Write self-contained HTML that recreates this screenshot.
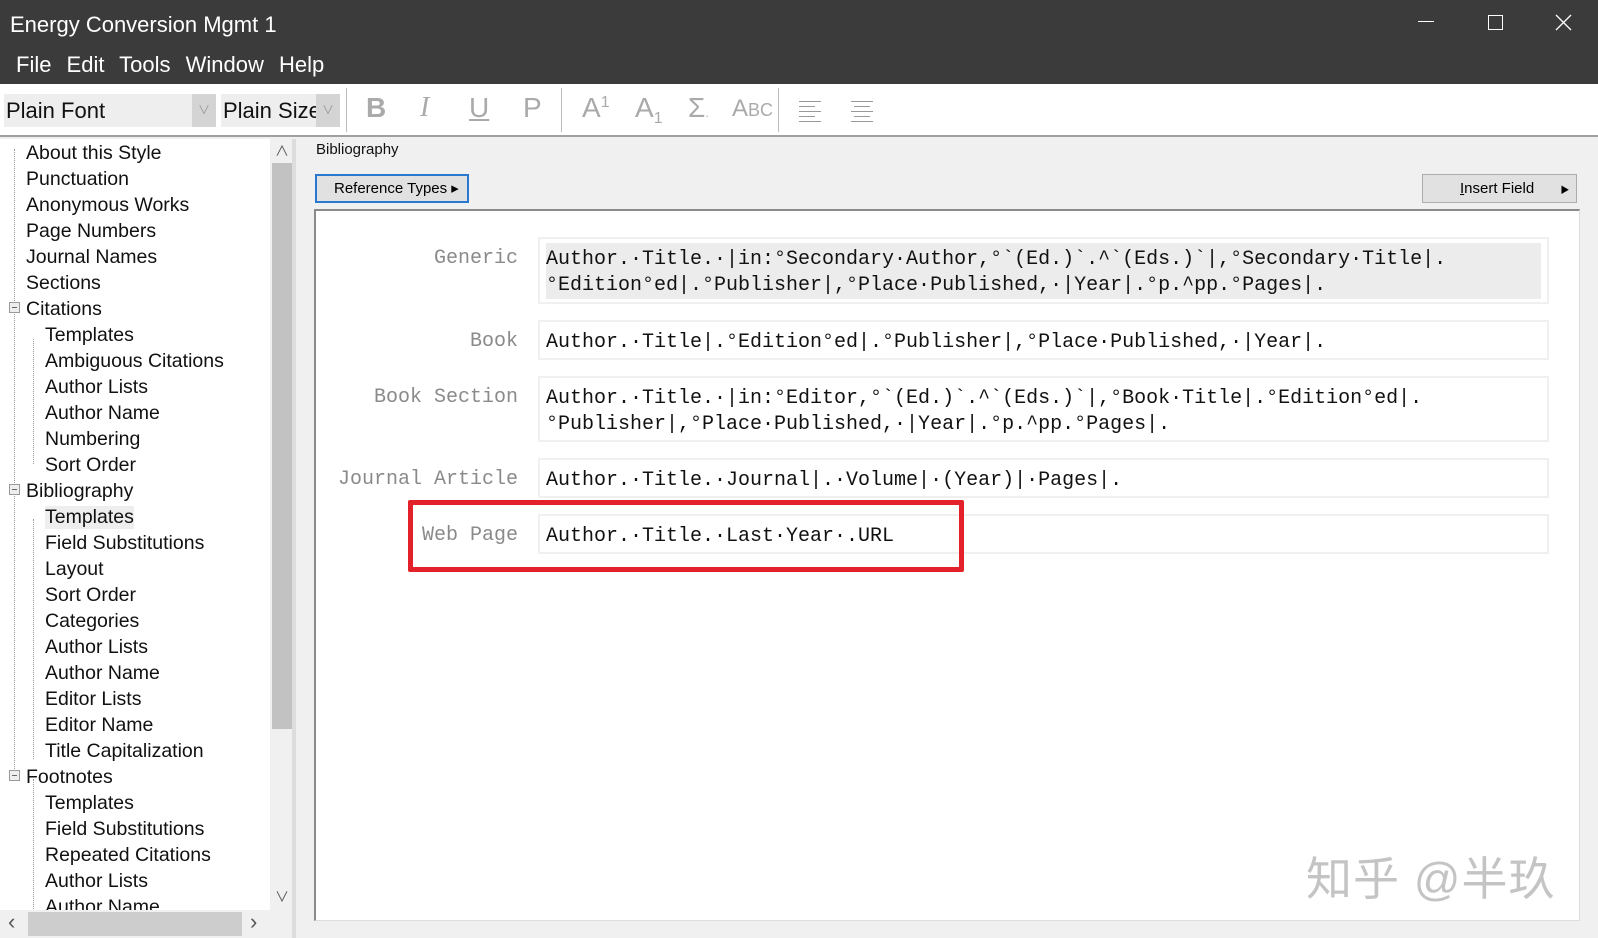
<!DOCTYPE html>
<html><head><meta charset="utf-8"><style>
*{margin:0;padding:0;box-sizing:border-box}
body{width:1598px;height:938px;overflow:hidden;background:#f0f0f0;font-family:"Liberation Sans","Noto Sans CJK SC",sans-serif;position:relative}
.abs{position:absolute}
#title{left:0;top:0;width:1598px;height:84px;background:#3b3b3b;color:#fff}
#title .t{left:10px;top:12px;font-size:22px}
#title .m{left:16px;top:52px;font-size:22px;word-spacing:9px}
#tb{left:0;top:84px;width:1598px;height:53px;background:#fff;border-bottom:2px solid #a0a0a0}
.combo{background:#eee;height:33px;top:10px;font-size:22px;line-height:33px;padding-left:2px;color:#111;overflow:hidden;white-space:nowrap}
.dd{background:#d4d4d4;width:24px;height:33px;top:0;right:0;color:#999;font-size:12px;text-align:center}
.ic{top:8px;font-size:28px;color:#aaa}
.sep{top:4px;width:1px;height:44px;background:#bbb}
#tree{left:0;top:139px;width:296px;height:799px;background:#fff;border-right:4px solid #ddd}
.it{font-size:19.5px;color:#111;position:absolute;white-space:nowrap}
.mono{font-family:"Liberation Mono",monospace;font-size:20px}
.lab{color:#8a8a8a;text-align:right;width:220px;left:298px}
.fld{left:538px;width:1011px;border:2px solid #f0f0f0;background:#fff;padding:8px 6px 4px;color:#111;line-height:26px;white-space:pre}
.al{width:22px;height:1px;background:#999;position:absolute}
</style></head><body>
<div id="title" class="abs">
 <div class="abs t">Energy Conversion Mgmt 1</div>
 <div class="abs m">File Edit Tools Window Help</div>
 <div class="abs" style="left:1418px;top:21px;width:16px;height:1px;background:#fff"></div>
 <div class="abs" style="left:1488px;top:15px;width:15px;height:15px;border:1px solid #fff"></div>
 <svg class="abs" style="left:1555px;top:14px" width="17" height="17"><path d="M1 1L16 16M16 1L1 16" stroke="#fff" stroke-width="1.3"/></svg>
</div>
<div id="tb" class="abs">
 <div class="abs combo" style="left:4px;width:212px">Plain Font<div class="abs dd">&#8744;</div></div>
 <div class="abs combo" style="left:221px;width:119px">Plain Size<div class="abs dd">&#8744;</div></div>
 <div class="abs sep" style="left:346px"></div>
 <div class="abs ic" style="left:366px;font-weight:bold">B</div>
 <div class="abs ic" style="left:420px;font-style:italic;font-family:'Liberation Serif',serif">I</div>
 <div class="abs ic" style="left:469px;text-decoration:underline">U</div>
 <div class="abs ic" style="left:523px">P</div>
 <div class="abs sep" style="left:561px"></div>
 <div class="abs ic" style="left:582px">A<span style="font-size:16px;vertical-align:10px">1</span></div>
 <div class="abs ic" style="left:635px">A<span style="font-size:16px;vertical-align:-6px">1</span></div>
 <div class="abs ic" style="left:688px">&Sigma;<span style="font-size:12px">.</span></div>
 <div class="abs ic" style="left:732px;font-size:24px;top:11px">A<span style="font-size:18px">BC</span></div>
 <div class="abs sep" style="left:778px"></div>
 <div class="al" style="left:799px;top:17px"></div><div class="al" style="left:799px;top:22px;width:16px"></div><div class="al" style="left:799px;top:27px"></div><div class="al" style="left:799px;top:32px;width:16px"></div><div class="al" style="left:799px;top:37px"></div>
 <div class="al" style="left:851px;top:17px"></div><div class="al" style="left:854px;top:22px;width:16px"></div><div class="al" style="left:851px;top:27px"></div><div class="al" style="left:854px;top:32px;width:16px"></div><div class="al" style="left:851px;top:37px"></div>
</div>
<div id="tree" class="abs">
 <div class="abs" style="left:14px;top:10px;height:630px;border-left:1px dotted #999"></div>
 <div class="abs" style="left:33px;top:200px;height:125px;border-left:1px dotted #999"></div>
 <div class="abs" style="left:33px;top:380px;height:240px;border-left:1px dotted #999"></div>
 <div class="abs" style="left:33px;top:640px;height:150px;border-left:1px dotted #999"></div>
 <div class="it" style="left:26px;top:3px">About this Style</div>
 <div class="it" style="left:26px;top:29px">Punctuation</div>
 <div class="it" style="left:26px;top:55px">Anonymous Works</div>
 <div class="it" style="left:26px;top:81px">Page Numbers</div>
 <div class="it" style="left:26px;top:107px">Journal Names</div>
 <div class="it" style="left:26px;top:133px">Sections</div>
 <div class="it" style="left:26px;top:159px">Citations</div>
 <div class="it" style="left:45px;top:185px">Templates</div>
 <div class="it" style="left:45px;top:211px">Ambiguous Citations</div>
 <div class="it" style="left:45px;top:237px">Author Lists</div>
 <div class="it" style="left:45px;top:263px">Author Name</div>
 <div class="it" style="left:45px;top:289px">Numbering</div>
 <div class="it" style="left:45px;top:315px">Sort Order</div>
 <div class="it" style="left:26px;top:341px">Bibliography</div>
 <div class="it" style="left:45px;top:367px;background:#eee">Templates</div>
 <div class="it" style="left:45px;top:393px">Field Substitutions</div>
 <div class="it" style="left:45px;top:419px">Layout</div>
 <div class="it" style="left:45px;top:445px">Sort Order</div>
 <div class="it" style="left:45px;top:471px">Categories</div>
 <div class="it" style="left:45px;top:497px">Author Lists</div>
 <div class="it" style="left:45px;top:523px">Author Name</div>
 <div class="it" style="left:45px;top:549px">Editor Lists</div>
 <div class="it" style="left:45px;top:575px">Editor Name</div>
 <div class="it" style="left:45px;top:601px">Title Capitalization</div>
 <div class="it" style="left:26px;top:627px">Footnotes</div>
 <div class="it" style="left:45px;top:653px">Templates</div>
 <div class="it" style="left:45px;top:679px">Field Substitutions</div>
 <div class="it" style="left:45px;top:705px">Repeated Citations</div>
 <div class="it" style="left:45px;top:731px">Author Lists</div>
 <div class="it" style="left:45px;top:757px;height:14px;overflow:hidden">Author Name</div>
 <div class="abs" style="left:9px;top:163px;width:11px;height:11px;border:1px solid #999;background:#eee"><div class="abs" style="left:2px;top:4px;width:5px;height:1px;background:#666"></div></div>
 <div class="abs" style="left:9px;top:345px;width:11px;height:11px;border:1px solid #999;background:#eee"><div class="abs" style="left:2px;top:4px;width:5px;height:1px;background:#666"></div></div>
 <div class="abs" style="left:9px;top:631px;width:11px;height:11px;border:1px solid #999;background:#eee"><div class="abs" style="left:2px;top:4px;width:5px;height:1px;background:#666"></div></div>
 <div class="abs" style="left:270px;top:0;width:22px;height:771px;background:#f0f0f0"></div>
 <div class="abs" style="left:272px;top:24px;width:20px;height:566px;background:#c2c2c2"></div>
 <div class="abs" style="left:275px;top:2px;font-size:14px;color:#555">&#8743;</div>
 <div class="abs" style="left:275px;top:748px;font-size:14px;color:#555">&#8744;</div>
 <div class="abs" style="left:0;top:771px;width:292px;height:28px;background:#f0f0f0"></div>
 <div class="abs" style="left:28px;top:773px;width:214px;height:24px;background:#cdcdcd"></div>
 <div class="abs" style="left:8px;top:770px;font-size:22px;color:#555">&lsaquo;</div>
 <div class="abs" style="left:250px;top:770px;font-size:22px;color:#555">&rsaquo;</div>
</div>
<div class="abs" style="left:316px;top:141px;font-size:15px;color:#111">Bibliography</div>
<div class="abs" style="left:315px;top:174px;width:154px;height:29px;background:#e1e1e1;border:2px solid #2a78d0;font-size:15px;line-height:25px;padding-left:17px">Reference Types &#9656;</div>
<div class="abs" style="left:1422px;top:174px;width:155px;height:29px;background:#e1e1e1;border:1px solid #adadad;font-size:15px;line-height:27px;padding-left:37px"><u>I</u>nsert Field <span style="margin-left:22px;font-size:9px">&#9654;</span></div>
<div class="abs" style="left:314px;top:209px;width:1266px;height:712px;background:#fff;border-top:2px solid #8a8a8a;border-left:2px solid #8a8a8a;border-right:1px solid #ddd;border-bottom:1px solid #ddd"></div>
<div class="abs mono lab" style="top:247px">Generic</div>
<div class="abs mono fld" style="top:237px;height:67px;padding-top:4px"><span style="background:#ececec;display:block;padding-top:4px">Author.·Title.·|in:°Secondary·Author,°`(Ed.)`.^`(Eds.)`|,°Secondary·Title|.
°Edition°ed|.°Publisher|,°Place·Published,·|Year|.°p.^pp.°Pages|.</span></div>
<div class="abs mono lab" style="top:330px">Book</div>
<div class="abs mono fld" style="top:320px;height:40px">Author.·Title|.°Edition°ed|.°Publisher|,°Place·Published,·|Year|.</div>
<div class="abs mono lab" style="top:386px">Book Section</div>
<div class="abs mono fld" style="top:376px;height:66px">Author.·Title.·|in:°Editor,°`(Ed.)`.^`(Eds.)`|,°Book·Title|.°Edition°ed|.
°Publisher|,°Place·Published,·|Year|.°p.^pp.°Pages|.</div>
<div class="abs mono lab" style="top:468px">Journal Article</div>
<div class="abs mono fld" style="top:458px;height:40px">Author.·Title.·Journal|.·Volume|·(Year)|·Pages|.</div>
<div class="abs mono lab" style="top:524px">Web Page</div>
<div class="abs mono fld" style="top:514px;height:40px">Author.·Title.·Last·Year·.URL</div>
<div class="abs" style="left:408px;top:500px;width:556px;height:72px;border:5px solid #e3212b;border-radius:2px"></div>
<div class="abs" style="left:1306px;top:843px;font-size:46px;color:#c4c4c4;font-family:'Liberation Sans','Noto Sans CJK SC',sans-serif;white-space:nowrap;letter-spacing:1px">知乎 @半玖</div>
</body></html>
